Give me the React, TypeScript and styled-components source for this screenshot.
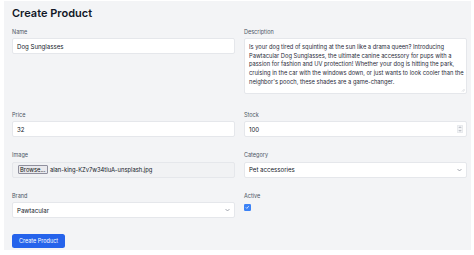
import React from "react";
import styled, { createGlobalStyle } from "styled-components";

const Global = createGlobalStyle`
  html, body { margin: 0; padding: 0; background: #ffffff; }
  body { font-family: Inter, "Noto Sans", sans-serif; }
  * { box-sizing: border-box; }
`;

const Panel = styled.div`
  margin: 1px 3px 0 4px;
  height: 249px;
  padding: 4.5px 4px 0 8px;
  background: #f3f4f6;
`;

const Title = styled.h1`
  margin: 0 0 9px 0;
  font-size: 11px;
  line-height: 14px;
  font-weight: 600;
  color: #111827;
`;

const Form = styled.div`
  display: grid;
  grid-template-columns: 223px 223px;
  column-gap: 9px;
  row-gap: 15px;
`;

const Field = styled.div`
  display: flex;
  flex-direction: column;
`;

const Label = styled.label`
  display: block;
  font-size: 5.5px;
  line-height: 7px;
  color: #4b5563;
  margin-bottom: 2.5px;
`;

const boxBase = `
  height: 16px;
  background: #ffffff;
  border: 1px solid #e5e7eb;
  border-radius: 2px;
  font-size: 6.1px;
  color: #111827;
  display: flex;
  align-items: center;
  padding: 0 4px;
`;

const TextBox = styled.div`
  ${boxBase}
`;

const TextArea = styled.div`
  position: relative;
  height: 56px;
  margin-bottom: 2.5px;
  background: #ffffff;
  border: 1px solid #e5e7eb;
  border-radius: 2px;
  font-size: 5.75px;
  line-height: 8.7px;
  color: #1f2937;
  padding: 4px 4px;
  white-space: nowrap;
  overflow: hidden;
`;

const Grip = styled.svg`
  position: absolute;
  right: 1px;
  bottom: 1px;
`;

const SpinBox = styled.div`
  ${boxBase}
  justify-content: space-between;
  padding-right: 3px;
`;

const SelectBox = styled.div`
  ${boxBase}
  justify-content: space-between;
  padding-right: 4px;
`;

const FileBox = styled.div`
  ${boxBase}
  background: #f1f2f4;
  padding-left: 4.5px;
  gap: 2px;
`;

const BrowseButton = styled.span`
  height: 9px;
  padding: 0 1.5px;
  display: inline-flex;
  align-items: center;
  background: #e9e9ed;
  border: 0.75px solid #8f8f9d;
  border-radius: 1px;
  font-size: 5.8px;
  color: #111;
`;

const FileName = styled.span`
  font-size: 5.8px;
  color: #111827;
`;

const CheckRow = styled.div`
  height: 16px;
  display: flex;
  align-items: flex-start;
  padding-top: 2px;
`;

const CheckBox = styled.span`
  width: 7px;
  height: 7px;
  border-radius: 1.2px;
  background: #3b82f6;
  display: inline-flex;
  align-items: center;
  justify-content: center;
`;

const Submit = styled.button`
  margin-top: 16px;
  width: 53px;
  height: 14px;
  border: none;
  border-radius: 2.5px;
  background: #2563eb;
  color: #ffffff;
  font-family: Inter, "Noto Sans", sans-serif;
  font-size: 5.5px;
  padding: 0;
  display: flex;
  align-items: center;
  justify-content: center;
`;

const Chevron = () => (
  <svg width="5" height="4" viewBox="0 0 10 6">
    <path d="M1 1l4 4 4-4" fill="none" stroke="#6b7280" strokeWidth="1.2" />
  </svg>
);

const Spinner = () => (
  <svg width="6" height="8" viewBox="0 0 12 16">
    <rect x="0.5" y="0.5" width="11" height="15" rx="2" fill="#f3f4f6" stroke="#d1d5db" />
    <path d="M3.5 6l2.5-2.5L8.5 6" fill="none" stroke="#6b7280" strokeWidth="1" />
    <path d="M3.5 10l2.5 2.5L8.5 10" fill="none" stroke="#6b7280" strokeWidth="1" />
  </svg>
);

const descriptionLines = [
  "Is your dog tired of squinting at the sun like a drama queen? Introducing",
  "Pawtacular Dog Sunglasses, the ultimate canine accessory for pups with a",
  "passion for fashion and UV protection! Whether your dog is hitting the park,",
  "cruising in the car with the windows down, or just wants to look cooler than the",
  "neighbor's pooch, these shades are a game-changer.",
];

export default function App() {
  return (
    <>
      <Global />
      <Panel>
        <Title>Create Product</Title>
        <Form>
          <Field>
            <Label>Name</Label>
            <TextBox>Dog Sunglasses</TextBox>
          </Field>
          <Field>
            <Label>Description</Label>
            <TextArea>
              {descriptionLines.map((line, i) => (
                <React.Fragment key={i}>
                  {line}
                  {i < descriptionLines.length - 1 && <br />}
                </React.Fragment>
              ))}
              <Grip width="4" height="4" viewBox="0 0 8 8">
                <path d="M7 2L2 7M7 5L5 7" stroke="#9ca3af" strokeWidth="0.8" />
              </Grip>
            </TextArea>
          </Field>
          <Field>
            <Label>Price</Label>
            <TextBox>32</TextBox>
          </Field>
          <Field>
            <Label>Stock</Label>
            <SpinBox>
              <span>100</span>
              <Spinner />
            </SpinBox>
          </Field>
          <Field>
            <Label>Image</Label>
            <FileBox>
              <BrowseButton>Browse...</BrowseButton>
              <FileName>alan-king-KZv7w34tluA-unsplash.jpg</FileName>
            </FileBox>
          </Field>
          <Field>
            <Label>Category</Label>
            <SelectBox>
              <span>Pet accessories</span>
              <Chevron />
            </SelectBox>
          </Field>
          <Field>
            <Label>Brand</Label>
            <SelectBox>
              <span>Pawtacular</span>
              <Chevron />
            </SelectBox>
          </Field>
          <Field>
            <Label>Active</Label>
            <CheckRow>
              <CheckBox>
                <svg width="4.5" height="4.5" viewBox="0 0 8 8">
                  <path d="M1.5 4.2l1.8 1.8 3.3-3.8" fill="none" stroke="#fff" strokeWidth="1.4" />
                </svg>
              </CheckBox>
            </CheckRow>
          </Field>
        </Form>
        <Submit>Create Product</Submit>
      </Panel>
    </>
  );
}
